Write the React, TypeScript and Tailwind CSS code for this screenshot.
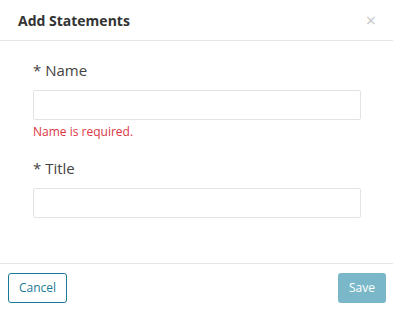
import React from "react";

const Field = ({ label, error }: { label: string; error?: string }) => {
  return (
    <div className="flex flex-col">
      <label className="text-[15px] leading-5 text-[#444]">* {label}</label>
      <input
        type="text"
        className="mt-[10px] h-[30px] w-full rounded-[2px] border border-[#e3e3e3] bg-white px-2 text-sm outline-none"
      />
      {error && (
        <p className="mt-[4px] text-[12px] leading-4 text-[#dc3545]">{error}</p>
      )}
    </div>
  );
};

export default function App() {
  return (
    <div
      className="flex h-[311px] w-[393px] flex-col bg-white"
      style={{ fontFamily: '"Open Sans", sans-serif' }}
    >
      <div className="flex h-[41px] items-center justify-between border-b border-[#e5e5e5] pl-[18px] pr-[17px]">
        <h2 className="text-[14px] font-bold text-[#333]">Add Statements</h2>
        <button className="text-[18px] leading-none text-[#c8c8c8]">×</button>
      </div>
      <div className="flex flex-1 flex-col pl-[33px] pr-[32px] pt-[19px]">
        <Field label="Name" error="Name is required." />
        <div className="mt-[18px]">
          <Field label="Title" />
        </div>
      </div>
      <div className="flex h-[48px] items-center justify-between border-t border-[#e5e5e5] px-[7px] pt-[1px]">
        <button className="ml-[1px] h-[30px] rounded-[3px] border border-[#1b7a98] px-[10px] text-[12px] text-[#1b7a98]">
          Cancel
        </button>
        <button className="h-[30px] rounded-[3px] bg-[#7ab8c9] px-[11px] text-[12px] text-white">
          Save
        </button>
      </div>
    </div>
  );
}
